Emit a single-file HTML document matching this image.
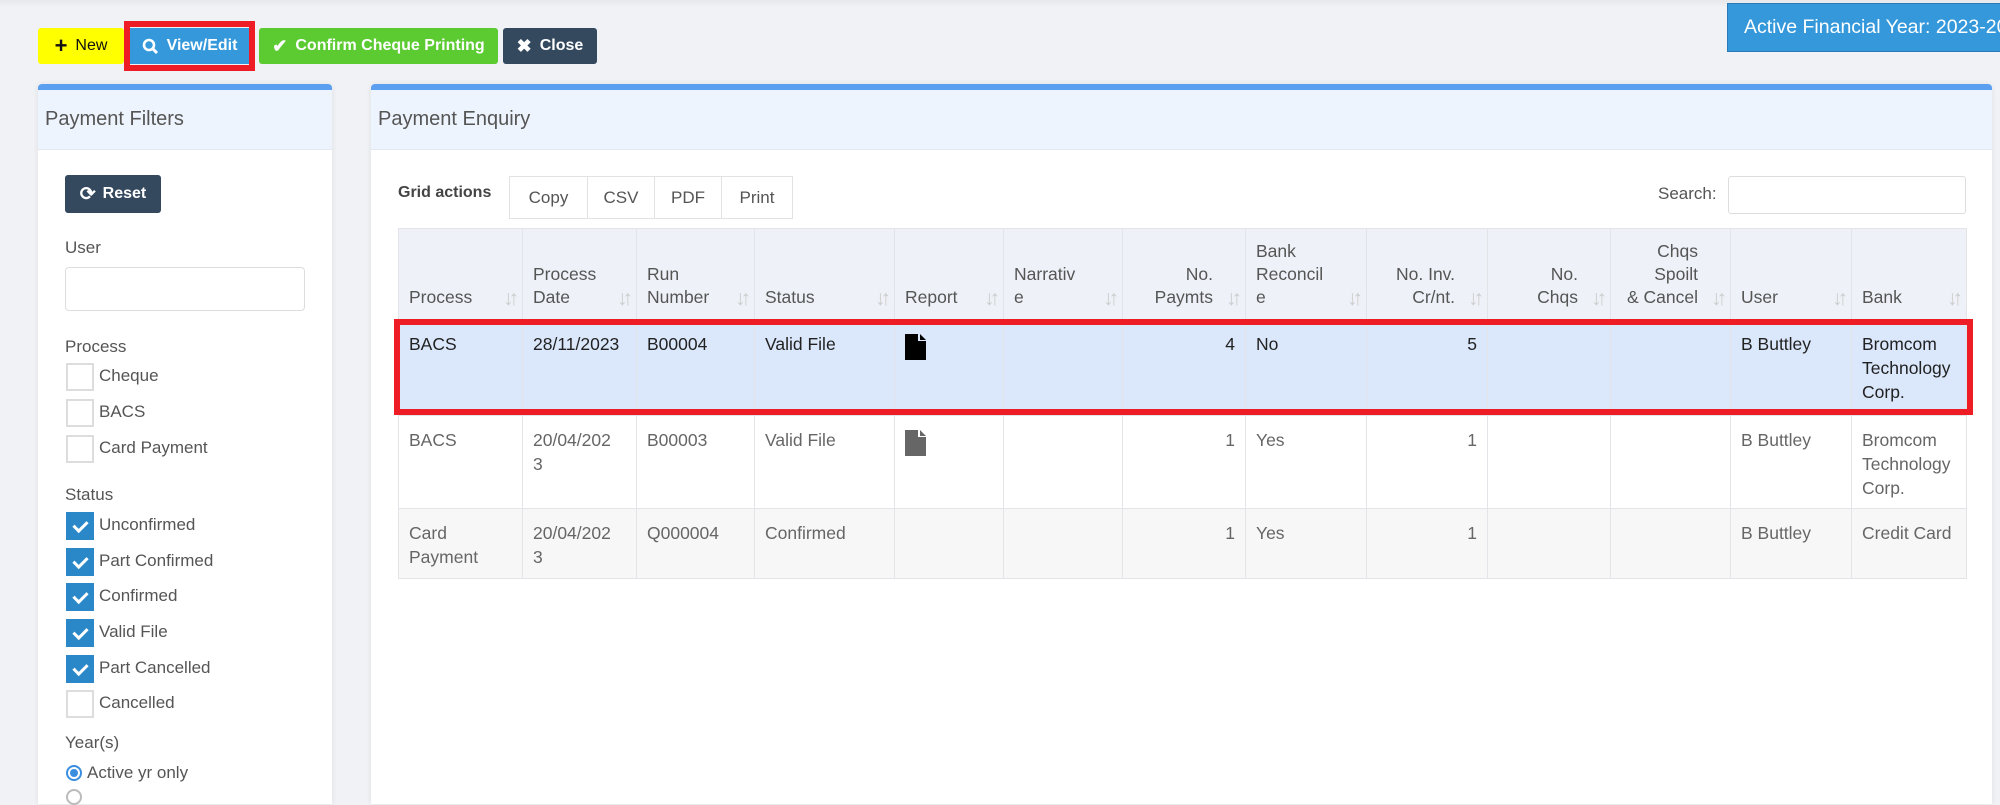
<!DOCTYPE html>
<html><head><meta charset="utf-8">
<style>
*{box-sizing:border-box;margin:0;padding:0}
body{width:2000px;height:791px;overflow:hidden;background:#f0f2f6;font-family:"Liberation Sans",Arial,sans-serif;position:relative;color:#555}
.abs{position:absolute}
.btn{position:absolute;top:28px;height:36px;border-radius:3px;font-size:16px;font-weight:bold;display:flex;align-items:center;justify-content:center;gap:8px}
.panel{position:absolute;background:#fff;border-top:6px solid #5b9ff0;border-radius:4px 4px 0 0;box-shadow:0 0 6px rgba(0,0,0,.08)}
.phead{height:60px;background:#edf4fd;border-bottom:1px solid #e3e9f0;font-size:20px;color:#555;padding-left:7px;display:flex;align-items:center}
.lbl{position:absolute;left:65px;font-size:17px;color:#555;transform:translateY(-50%)}
.cb{position:absolute;left:66px;width:28px;height:28px;border:2px solid #ddd;background:#fff;transform:translateY(-50%)}
.cb.on{background:#2a88c8;border-color:#2a88c8}
.cb.on::after{content:"";position:absolute;left:8px;top:4px;width:6px;height:11px;border:solid #fff;border-width:0 3px 3px 0;transform:rotate(45deg)}
.cbl{position:absolute;left:99px;font-size:17px;color:#555;transform:translateY(-50%)}
table{position:absolute;left:398px;top:228px;border-collapse:collapse;table-layout:fixed;font-size:17.5px}
td,th{border:1px solid #e2e4e8;vertical-align:top;padding:12px 10px 0 10px;line-height:24px;position:relative;font-weight:normal;text-align:left}
th{background:#eef2f8;vertical-align:bottom;padding:0 32px 10px 10px;color:#555;line-height:23px}
th.r{text-align:right}
th::after{content:"\2193\2191";position:absolute;right:8px;bottom:9px;color:#ccc;letter-spacing:-5px;font-size:21px;font-weight:bold}
td.r{text-align:right}
tr.s td{background:#dbe8fb;color:#222}
tr.w td{background:#fff;color:#666}
tr.g td{background:#f7f7f7;color:#666}
.ga{position:absolute;top:176px;height:43px;border:1px solid #e2e2e2;background:#fff;font-size:17px;color:#555;display:flex;align-items:center;justify-content:center}
</style></head><body>
<div class="abs" style="left:0;top:0;width:2000px;height:8px;background:linear-gradient(#e6e8ec,#f0f2f6)"></div>

<div class="btn" style="left:38px;width:86px;background:#ffff00;color:#111;font-weight:normal;font-size:16px"><b style="font-size:22px">+</b>New</div>
<div class="abs" style="left:124px;top:21px;width:131px;height:50px;border:6px solid #ee1c25"></div>
<div class="btn" style="left:130px;width:119px;background:#3498db;color:#fff;border-radius:0">
<svg width="17" height="17" viewBox="0 0 17 17"><circle cx="7" cy="7" r="5" fill="none" stroke="#fff" stroke-width="2.6"/><path d="M10.5 10.5L15 15" stroke="#fff" stroke-width="3"/></svg>View/Edit</div>
<div class="btn" style="left:259px;width:239px;background:#5ccb32;color:#fff"><span style="font-size:18px">✔</span>Confirm Cheque Printing</div>
<div class="btn" style="left:503px;width:94px;background:#34495e;color:#fff"><span style="font-size:18px">✖</span>Close</div>

<div class="abs" style="left:1727px;top:3px;width:290px;height:49px;background:#3498db;border:1px solid #2a7ab8;color:#fff;font-size:19.5px;padding:12px 0 0 16px;white-space:nowrap">Active Financial Year: 2023-2024</div>

<div class="panel" style="left:38px;top:84px;width:294px;height:720px"><div class="phead">Payment Filters</div></div>
<div class="abs" style="left:65px;top:175px;width:96px;height:38px;background:#34495e;border-radius:3px;color:#fff;font-size:16px;font-weight:bold;display:flex;align-items:center;justify-content:center;gap:7px"><span style="font-size:19px">⟳</span>Reset</div>
<div class="lbl" style="top:248px">User</div>
<div class="abs" style="left:65px;top:267px;width:240px;height:44px;border:1px solid #ddd;border-radius:4px;background:#fff"></div>
<div class="lbl" style="top:347px">Process</div>
<div class="cb" style="top:377px"></div><div class="cbl" style="top:376px">Cheque</div>
<div class="cb" style="top:413px"></div><div class="cbl" style="top:412px">BACS</div>
<div class="cb" style="top:449px"></div><div class="cbl" style="top:448px">Card Payment</div>
<div class="lbl" style="top:495px">Status</div>
<div class="cb on" style="top:526px"></div><div class="cbl" style="top:525px">Unconfirmed</div>
<div class="cb on" style="top:562px"></div><div class="cbl" style="top:561px">Part Confirmed</div>
<div class="cb on" style="top:597px"></div><div class="cbl" style="top:596px">Confirmed</div>
<div class="cb on" style="top:633px"></div><div class="cbl" style="top:632px">Valid File</div>
<div class="cb on" style="top:669px"></div><div class="cbl" style="top:668px">Part Cancelled</div>
<div class="cb" style="top:704px"></div><div class="cbl" style="top:703px">Cancelled</div>
<div class="lbl" style="top:743px">Year(s)</div>
<div class="abs" style="left:66px;top:765px;width:16px;height:16px;border-radius:50%;border:2px solid #3a8ee0;background:#fff"><div style="position:absolute;left:2px;top:2px;width:8px;height:8px;border-radius:50%;background:#3a8ee0"></div></div>
<div class="abs" style="left:87px;top:763px;font-size:17px;color:#555">Active yr only</div>
<div class="abs" style="left:66px;top:789px;width:16px;height:16px;border-radius:50%;border:2px solid #bbb"></div>

<div class="panel" style="left:371px;top:84px;width:1621px;height:720px"><div class="phead">Payment Enquiry</div></div>
<div class="abs" style="left:398px;top:184px;font-size:16px;font-weight:bold;color:#444">Grid actions</div>
<div class="ga" style="left:509px;width:79px">Copy</div>
<div class="ga" style="left:587px;width:68px">CSV</div>
<div class="ga" style="left:654px;width:68px">PDF</div>
<div class="ga" style="left:721px;width:72px">Print</div>
<div class="abs" style="left:1658px;top:184px;font-size:17px;color:#555">Search:</div>
<div class="abs" style="left:1728px;top:176px;width:238px;height:38px;border:1px solid #ddd;border-radius:3px;background:#fff"></div>

<table>
<colgroup><col style="width:124px"><col style="width:114px"><col style="width:118px"><col style="width:140px"><col style="width:109px"><col style="width:119px"><col style="width:123px"><col style="width:121px"><col style="width:121px"><col style="width:123px"><col style="width:120px"><col style="width:121px"><col style="width:115px"></colgroup>
<tr style="height:91px"><th>Process</th><th>Process<br>Date</th><th>Run<br>Number</th><th>Status</th><th>Report</th><th>Narrativ<br>e</th><th class="r">No.<br>Paymts</th><th>Bank<br>Reconcil<br>e</th><th class="r">No. Inv.<br>Cr/nt.</th><th class="r">No.<br>Chqs</th><th class="r">Chqs<br>Spoilt<br>&amp; Cancel</th><th>User</th><th>Bank</th></tr>
<tr class="s" style="height:96px"><td>BACS</td><td>28/11/2023</td><td>B00004</td><td>Valid File</td><td><svg width="22" height="26" viewBox="0 0 22 26" style="margin-top:2px"><path d="M0 0H13V7H21V26H0Z M15 0L21 6H15Z" fill="#000"/></svg></td><td></td><td class="r">4</td><td>No</td><td class="r">5</td><td></td><td></td><td>B Buttley</td><td>Bromcom<br>Technology<br>Corp.</td></tr>
<tr class="w" style="height:93px"><td>BACS</td><td>20/04/202<br>3</td><td>B00003</td><td>Valid File</td><td><svg width="22" height="26" viewBox="0 0 22 26" style="margin-top:2px"><path d="M0 0H13V7H21V26H0Z M15 0L21 6H15Z" fill="#666"/></svg></td><td></td><td class="r">1</td><td>Yes</td><td class="r">1</td><td></td><td></td><td>B Buttley</td><td>Bromcom<br>Technology<br>Corp.</td></tr>
<tr class="g" style="height:70px"><td>Card<br>Payment</td><td>20/04/202<br>3</td><td>Q000004</td><td>Confirmed</td><td></td><td></td><td class="r">1</td><td>Yes</td><td class="r">1</td><td></td><td></td><td>B Buttley</td><td>Credit Card</td></tr>
</table>
<div class="abs" style="left:394px;top:319px;width:1579px;height:96px;border:6px solid #ee1c25"></div>
</body></html>
